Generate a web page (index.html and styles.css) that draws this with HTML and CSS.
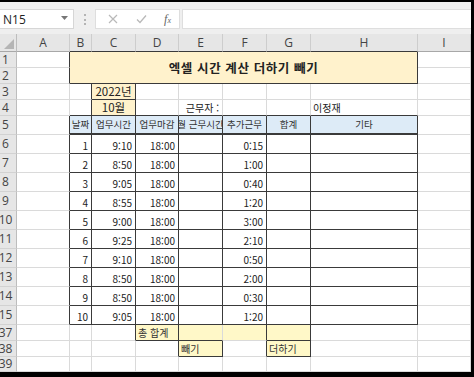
FILE: index.html
```html
<!DOCTYPE html>
<html lang="ko">
<head>
    <meta charset="UTF-8">
    <meta name="viewport" content="width=device-width, initial-scale=1.0">
    <title>엑셀 시간 계산 더하기 빼기</title>
    <link rel="stylesheet" href="styles.css">
</head>
<body>
    <div class="window">
        <div class="formula-bar">
            <div class="name-box">
                <span>N15</span>
                <svg class="drop" width="7" height="4" viewBox="0 0 7 4"><path d="M0 0h7L3.5 4z" fill="#777"/></svg>
            </div>
            <div class="grip"></div>
            <div class="fx-tools">
                <svg width="10" height="10" viewBox="0 0 10 10"><path d="M1 1l8 8M9 1l-8 8" stroke="#b9b9b9" stroke-width="1.2"/></svg>
                <svg width="11" height="10" viewBox="0 0 11 10"><path d="M1 5.5l3 3L10 1.5" stroke="#b9b9b9" stroke-width="1.3" fill="none"/></svg>
                <span class="fx">f<small>x</small></span>
            </div>
            <div class="formula-input"></div>
        </div>

        <table class="sheet">
            <colgroup>
                <col style="width:17px"><col style="width:53px"><col style="width:22px">
                <col style="width:44px"><col style="width:43px"><col style="width:44px">
                <col style="width:44px"><col style="width:44px"><col style="width:107px">
                <col style="width:53px">
            </colgroup>
            <tr class="h-head">
                <th class="corner"><span class="tri"></span></th>
                <th class="ch">A</th><th class="ch dk">B</th><th class="ch dk">C</th><th class="ch dk">D</th>
                <th class="ch dk">E</th><th class="ch dk">F</th><th class="ch dk">G</th><th class="ch dk">H</th>
                <th class="ch">I</th>
            </tr>
            <tr class="h16">
                <th class="rh"><div>1</div></th><td class="r"></td>
                <td class="title gold r b" colspan="7" rowspan="2">엑셀 시간 계산 더하기 빼기</td>
                <td></td>
            </tr>
            <tr class="h16">
                <th class="rh"><div>2</div></th><td class="r"></td><td></td>
            </tr>
            <tr class="h16">
                <th class="rh"><div>3</div></th><td></td><td class="r"></td>
                <td class="gold r b mid">2022년</td>
                <td></td><td></td><td></td><td></td><td></td><td></td>
            </tr>
            <tr class="h16">
                <th class="rh"><div>4</div></th><td></td><td class="r b"></td>
                <td class="gold r b mid">10월</td>
                <td class="b"></td><td class="b num">근무자 :</td><td class="b"></td><td class="b"></td>
                <td class="b name">이정재</td><td></td>
            </tr>
            <tr class="h19">
                <th class="rh"><div>5</div></th><td class="r"></td>
                <td class="head blue r"><div class="fit">날짜</div></td>
                <td class="head blue r"><div class="fit">업무시간</div></td>
                <td class="head blue r"><div class="fit">업무마감</div></td>
                <td class="head blue r"><div class="fit">월 근무시간</div></td>
                <td class="head blue r"><div class="fit">추가근무</div></td>
                <td class="head blue r"><div class="fit">합계</div></td>
                <td class="head blue r"><div class="fit">기타</div></td>
                <td></td>
            </tr>
            <tr class="h19">
                <th class="rh"><div>6</div></th><td class="r"></td>
                <td class="num r b">1</td><td class="num r b">9:10</td><td class="num r b">18:00</td>
                <td class="r b"></td><td class="num r b">0:15</td><td class="r b"></td><td class="r b"></td><td></td>
            </tr>
            <tr class="h19">
                <th class="rh"><div>7</div></th><td class="r"></td>
                <td class="num r b">2</td><td class="num r b">8:50</td><td class="num r b">18:00</td>
                <td class="r b"></td><td class="num r b">1:00</td><td class="r b"></td><td class="r b"></td><td></td>
            </tr>
            <tr class="h19">
                <th class="rh"><div>8</div></th><td class="r"></td>
                <td class="num r b">3</td><td class="num r b">9:05</td><td class="num r b">18:00</td>
                <td class="r b"></td><td class="num r b">0:40</td><td class="r b"></td><td class="r b"></td><td></td>
            </tr>
            <tr class="h19">
                <th class="rh"><div>9</div></th><td class="r"></td>
                <td class="num r b">4</td><td class="num r b">8:55</td><td class="num r b">18:00</td>
                <td class="r b"></td><td class="num r b">1:20</td><td class="r b"></td><td class="r b"></td><td></td>
            </tr>
            <tr class="h19">
                <th class="rh"><div>10</div></th><td class="r"></td>
                <td class="num r b">5</td><td class="num r b">9:00</td><td class="num r b">18:00</td>
                <td class="r b"></td><td class="num r b">3:00</td><td class="r b"></td><td class="r b"></td><td></td>
            </tr>
            <tr class="h19">
                <th class="rh"><div>11</div></th><td class="r"></td>
                <td class="num r b">6</td><td class="num r b">9:25</td><td class="num r b">18:00</td>
                <td class="r b"></td><td class="num r b">2:10</td><td class="r b"></td><td class="r b"></td><td></td>
            </tr>
            <tr class="h19">
                <th class="rh"><div>12</div></th><td class="r"></td>
                <td class="num r b">7</td><td class="num r b">9:10</td><td class="num r b">18:00</td>
                <td class="r b"></td><td class="num r b">0:50</td><td class="r b"></td><td class="r b"></td><td></td>
            </tr>
            <tr class="h19">
                <th class="rh"><div>13</div></th><td class="r"></td>
                <td class="num r b">8</td><td class="num r b">8:50</td><td class="num r b">18:00</td>
                <td class="r b"></td><td class="num r b">2:00</td><td class="r b"></td><td class="r b"></td><td></td>
            </tr>
            <tr class="h19">
                <th class="rh"><div>14</div></th><td class="r"></td>
                <td class="num r b">9</td><td class="num r b">8:50</td><td class="num r b">18:00</td>
                <td class="r b"></td><td class="num r b">0:30</td><td class="r b"></td><td class="r b"></td><td></td>
            </tr>
            <tr class="h19">
                <th class="rh"><div>15</div></th><td class="r"></td>
                <td class="num r b">10</td><td class="num r b">9:05</td><td class="num r b">18:00</td>
                <td class="r b"></td><td class="num r b">1:20</td><td class="r b"></td><td class="r b"></td><td></td>
            </tr>
            <tr class="h16">
                <th class="rh"><div>37</div></th><td></td><td></td><td class="r"></td>
                <td class="yel r b small">총 합계</td>
                <td class="yel b"></td><td class="yel r"></td><td class="yel r b"></td>
                <td></td><td></td>
            </tr>
            <tr class="h16">
                <th class="rh"><div>38</div></th><td></td><td></td><td></td>
                <td class="r"></td><td class="yel r b small">빼기</td><td class="r"></td>
                <td class="yel r b small">더하기</td><td></td><td></td>
            </tr>
            <tr class="h15">
                <th class="rh"><div>39</div></th><td></td><td></td><td></td><td></td>
                <td></td><td></td><td></td><td></td><td></td>
            </tr>
        </table>
    </div>
</body>
</html>
```

FILE: styles.css
```css
html, body {
    margin: 0;
    padding: 0;
    background: #000;
}

body {
    padding-top: 2px;
    width: 474px;
    height: 375px;
    overflow: hidden;
    font-family: "Noto Sans CJK KR", "Noto Sans", sans-serif;
}

.window {
    width: 471px;
    height: 370px;
    background: #fff;
    overflow: hidden;
}

/* formula bar */

.formula-bar {
    display: flex;
    align-items: flex-start;
    height: 32px;
    box-sizing: border-box;
    padding-top: 7px;
    background: #efefef;
}

.name-box {
    width: 74px;
    height: 20px;
    box-sizing: border-box;
    background: #fff;
    border: 1px solid #d6d6d6;
    border-left: none;
    display: flex;
    align-items: center;
    justify-content: space-between;
    padding: 0 5px 0 3px;
    font-family: "Open Sans", sans-serif;
    font-size: 12px;
    color: #222;
}

.name-box .drop {
    margin-top: -2px;
}

.grip {
    width: 2px;
    height: 11px;
    margin: 5px 6px 0 10px;
    border-left: 2px dotted #b4b4b4;
}

.fx-tools {
    width: 85px;
    height: 20px;
    box-sizing: border-box;
    margin-left: 1px;
    background: #fff;
    border: 1px solid #dedede;
    display: flex;
    align-items: center;
    justify-content: space-between;
    padding: 0 8px 0 12px;
}

.fx {
    font-family: "Liberation Serif", serif;
    font-style: italic;
    font-size: 12px;
    color: #666;
}

.fx small {
    font-size: 8px;
}

.formula-input {
    flex: 1;
    height: 20px;
    margin-left: 2px;
    background: #fff;
    border: 1px solid #dedede;
    border-right: none;
    box-sizing: border-box;
}

/* sheet grid */

.sheet {
    width: 471px;
    table-layout: fixed;
    border-collapse: separate;
    border-spacing: 0;
}

.sheet td,
.sheet th {
    padding: 0;
    border-right: 1px solid #dadada;
    border-bottom: 1px solid #dadada;
    white-space: nowrap;
    overflow: hidden;
    box-sizing: border-box;
}

.sheet td {
    font-size: 10px;
    line-height: 13px;
    color: #222;
    vertical-align: bottom;
    padding: 0 2px 1px;
}

.h-head { height: 18px; }
.h16 { height: 16px; }
.h15 { height: 15px; }
.h19 { height: 19px; }

.corner,
.ch,
.rh {
    background: #e6e6e6;
    font-family: "Open Sans", sans-serif;
    font-weight: normal;
    font-size: 12px;
    color: #444;
}

.corner {
    position: relative;
    border-right-color: #bdbdbd !important;
    border-bottom-color: #a8a8a8 !important;
}

.tri {
    position: absolute;
    right: 2px;
    bottom: 2px;
    width: 0;
    height: 0;
    border-left: 10px solid transparent;
    border-bottom: 10px solid #b5b5b5;
}

.ch {
    text-align: center;
    border-right-color: #cdcdcd !important;
    border-bottom-color: #a8a8a8 !important;
    line-height: 16px;
}

.ch.dk {
    border-bottom-color: #3a3a3a !important;
}

.rh {
    border-right-color: #bdbdbd !important;
    border-bottom-color: #d2d2d2 !important;
    overflow: visible !important;
}

.rh div {
    width: 21px;
    margin-left: -5px;
    text-align: center;
    line-height: 14px;
}

/* cell formats */

.r { border-right-color: #3a3a3a !important; }
.b { border-bottom-color: #3a3a3a !important; }

.gold { background: #fff2cc; }
.blue { background: #ddebf7; }
.yel { background: #fff8c8; }

.num {
    text-align: right;
    padding-right: 3px !important;
}

.mid {
    text-align: center;
    font-size: 11.5px !important;
}

.name {
    padding-left: 2px;
}

.title {
    text-align: center;
    vertical-align: middle !important;
    font-weight: bold;
    font-size: 12.5px !important;
    letter-spacing: 0.6px;
    color: #222;
}

.head {
    border-bottom: 2px solid #3a3a3a !important;
    vertical-align: middle !important;
    padding: 0 !important;
    font-size: 9.5px !important;
    color: #333 !important;
}

.head .fit {
    width: 70px;
    margin-left: calc(50% - 35px);
    text-align: center;
}

.small {
    font-size: 10px !important;
    color: #333 !important;
}
```
